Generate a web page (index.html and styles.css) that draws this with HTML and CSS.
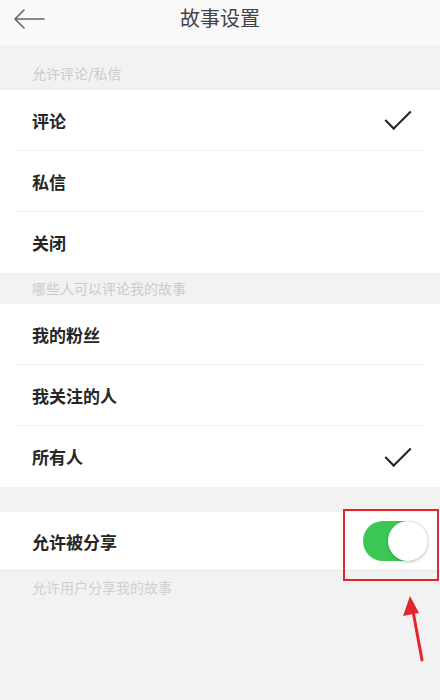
FILE: index.html
```html
<!DOCTYPE html>
<html lang="zh-CN">

<head>
  <meta charset="UTF-8">
  <meta name="viewport" content="width=device-width, initial-scale=1.0">
  <title>故事设置</title>

  <link rel="stylesheet" href="styles.css">
</head>

<body>
  <main class="screen">
    <header class="topbar">
      <svg class="back" width="32" height="22" viewBox="0 0 32 22">
        <path d="M31 11H2M11 2L2 11l9 9" fill="none" stroke="#666" stroke-width="1.6" stroke-linecap="round" stroke-linejoin="round" />
      </svg>
      <h1 class="title">故事设置</h1>
    </header>

    <div class="label label-first">允许评论/私信</div>
    <ul class="group">
      <li class="row">评论<span class="check"></span></li>
      <li class="row">私信</li>
      <li class="row">关闭</li>
    </ul>

    <div class="label">哪些人可以评论我的故事</div>
    <ul class="group">
      <li class="row">我的粉丝</li>
      <li class="row">我关注的人</li>
      <li class="row">所有人<span class="check"></span></li>
    </ul>

    <div class="spacer"></div>

    <div class="share">
      <div class="row row-toggle">
        允许被分享
        <span class="toggle"><span class="knob"></span></span>
      </div>
      <div class="mark-box"></div>
    </div>
    <p class="note">允许用户分享我的故事</p>

    <svg class="mark-arrow" width="30" height="70" viewBox="0 0 30 70">
      <path d="M22 66L13 17" stroke="#e3262c" stroke-width="3" stroke-linecap="round" />
      <path d="M10 2L3 22l16-3z" fill="#e3262c" />
    </svg>
  </main>
</body>

</html>
```

FILE: styles.css
```css
* {
  box-sizing: border-box;
}

body {
  margin: 0;
  background: #f2f2f2;
  font-family: "Noto Sans CJK SC", "Noto Sans", sans-serif;
}

.screen {
  position: relative;
  width: 440px;
  height: 700px;
  overflow: hidden;
}

.topbar {
  display: flex;
  align-items: flex-start;
  justify-content: center;
  height: 45px;
  padding-top: 6px;
  background: #f9f9f9;
  position: relative;
}

.back {
  position: absolute;
  left: 13px;
  top: 8px;
}

.title {
  margin: 0;
  font-size: 20px;
  line-height: 24px;
  font-weight: 400;
  color: #444;
}

.label {
  padding: 5px 32px 6px;
  font-size: 14px;
  line-height: 20px;
  color: #cbcbcb;
}

.label-first {
  padding-top: 18px;
  padding-bottom: 7px;
}

.group {
  list-style: none;
  margin: 0;
  padding: 0;
  background: #fff;
}

.row {
  display: flex;
  align-items: center;
  justify-content: space-between;
  height: 61px;
  margin: 0 15px;
  padding: 0 17px;
  font-size: 17px;
  font-weight: 700;
  color: #262626;
  border-bottom: 1px solid #efefef;
}

.group .row:last-child {
  border-bottom: none;
}

.check {
  width: 24px;
  height: 13px;
  margin-right: -2px;
  margin-top: -7px;
  border-left: 2px solid #222;
  border-bottom: 2px solid #222;
  transform: rotate(-45deg) scaleX(1.05);
}

.spacer {
  height: 25px;
}

.share {
  position: relative;
  background: #fff;
}

.row-toggle {
  height: 59px;
  margin: 0;
  padding: 0 12px 0 32px;
  border-bottom: 1px solid #e6e6e6;
}

.toggle {
  display: flex;
  justify-content: flex-end;
  width: 65px;
  height: 40px;
  border-radius: 20px;
  background: #3cc755;
}

.knob {
  width: 40px;
  height: 40px;
  border-radius: 50%;
  background: #fff;
  box-shadow: 0 1px 3px rgba(0, 0, 0, 0.25);
}

.mark-box {
  position: absolute;
  left: 343px;
  top: -3px;
  width: 96px;
  height: 72px;
  border: 2px solid #e3262c;
}

.note {
  margin: 0;
  padding: 6px 32px;
  font-size: 14px;
  line-height: 20px;
  color: #cfcfcf;
}

.mark-arrow {
  position: absolute;
  left: 400px;
  top: 594px;
}
```
